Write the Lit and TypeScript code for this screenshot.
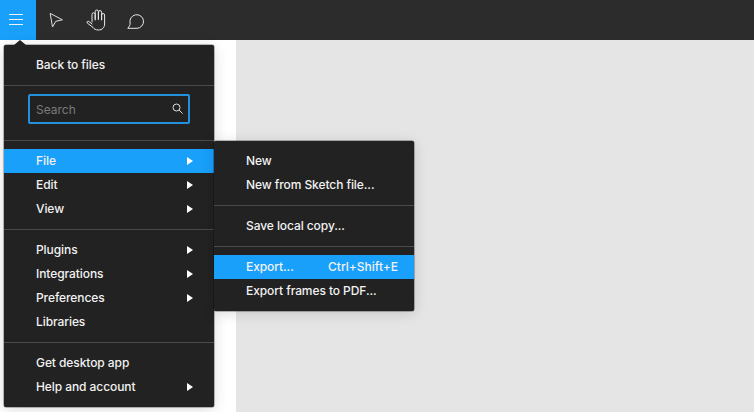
import { LitElement, html, css } from "lit";
import { customElement } from "lit/decorators.js";

type Row = { label: string; arrow?: boolean; active?: boolean; shortcut?: string };
type Group = Row[];

const mainGroups: Group[] = [
  [{ label: "File", arrow: true, active: true }, { label: "Edit", arrow: true }, { label: "View", arrow: true }],
  [{ label: "Plugins", arrow: true }, { label: "Integrations", arrow: true }, { label: "Preferences", arrow: true }, { label: "Libraries" }],
  [{ label: "Get desktop app" }, { label: "Help and account", arrow: true }],
];
const subGroups: Group[] = [
  [{ label: "New" }, { label: "New from Sketch file..." }],
  [{ label: "Save local copy..." }],
  [{ label: "Export...", active: true, shortcut: "Ctrl+Shift+E" }, { label: "Export frames to PDF..." }],
];

@customElement("app-root")
export class AppRoot extends LitElement {
  static styles = css`
    :host { display: block; width: 754px; height: 412px; overflow: hidden; position: relative; background: #fff; font-family: Inter, "Liberation Sans", sans-serif; }
    .bar { height: 40px; background: #2c2c2c; display: flex; align-items: center; }
    .tool { width: 40px; height: 40px; display: flex; align-items: center; justify-content: center; color: #fff; }
    .tool svg { display: block; }
    .burger { width: 36px; background: #18a0fb; box-sizing: border-box; padding-left: 9px; justify-content: flex-start; }
    .stage { display: flex; height: 372px; }
    .left { width: 236px; background: #fff; }
    .canvas { flex: 1; background: #e5e5e5; }
    .menu { position: absolute; background: #222; border-radius: 2px; padding: 8px 0; color: #f2f2f2; font-size: 12px; font-weight: 500; line-height: 24px; box-shadow: 0 2px 14px rgba(0,0,0,.15), 0 0 0 .5px rgba(0,0,0,.5); }
    .main { left: 4px; top: 45px; width: 210px; }
    .sub { left: 214px; top: 141px; width: 200px; }
    .caret { position: absolute; left: 10px; top: -5px; width: 0; height: 0; border-left: 6px solid transparent; border-right: 6px solid transparent; border-bottom: 5px solid #222; }
    .row { height: 24px; padding-left: 32px; padding-right: 21px; display: flex; align-items: center; justify-content: space-between; white-space: nowrap; letter-spacing: -.08px; }
    .sub .row { padding-right: 16px; }
    .row.active { background: #18a0fb; }
    .key { letter-spacing: 0; }
    .arrow { width: 0; height: 0; border-left: 6px solid #fff; border-top: 4px solid transparent; border-bottom: 4px solid transparent; }
    .sep { height: 1px; background: #4a4a4a; margin: 8px 0; }
    .sep.wide { margin-top: 16px; }
    .search { margin: 0 24px; height: 30px; box-sizing: border-box; border: 2px solid #2391dc; border-radius: 2px; display: flex; align-items: center; justify-content: space-between; padding: 2px 5px 0 6px; color: #7a7a7a; font-weight: 400; }
    .search svg { display: block; color: #ddd; margin-top: -3px; }
  `;

  private rows(groups: Group[]) {
    return groups.map((g, i) => html`
      ${i ? html`<div class="sep"></div>` : ""}
      ${g.map((r) => html`<div class="row ${r.active ? "active" : ""}"><span>${r.label}</span>${r.shortcut ? html`<span class="key">${r.shortcut}</span>` : ""}${r.arrow ? html`<span class="arrow"></span>` : ""}</div>`)}
    `);
  }

  render() {
    return html`
      <div class="bar">
        <div class="tool burger">
          <svg width="14" height="12" viewBox="0 0 14 12" fill="none" stroke="currentColor" opacity=".9"><path d="M0 .5h14M0 5.5h14M0 10.5h14"/></svg>
        </div>
        <div class="tool">
          <svg width="16" height="16" viewBox="0 0 16 16" fill="none" stroke="currentColor" stroke-width="1" opacity=".85"><path d="M2.2 1.4l12.2 6.4-6.6 1.5-3.3 5.7z" stroke-linejoin="round"/></svg>
        </div>
        <div class="tool">
          <svg width="20" height="22" viewBox="0 0 20 22" fill="none" stroke="currentColor" stroke-width="1" stroke-linecap="round" stroke-linejoin="round" opacity=".9"><path d="M6 13V5.4a1.6 1.6 0 0 1 3.2 0V11M9.2 10V2.6a1.6 1.6 0 0 1 3.2 0V10.5M12.4 10V3.2a1.6 1.6 0 0 1 3.2 0V11M15.6 10.5V6a1.5 1.5 0 0 1 3 0v9c0 3.5-2.5 6-6 6-3 0-4.5-1-5.6-2.6L1.2 14c-.8-1.2.8-2.4 1.8-1.4L6 15"/></svg>
        </div>
        <div class="tool">
          <svg width="18" height="17" viewBox="0 0 18 17" fill="none" stroke="currentColor" stroke-width="1" stroke-linejoin="round" opacity=".9"><path d="M.8 16.3h9.2a6.8 6.8 0 1 0-6.9-5.2c.3 1.6-.8 3.3-2.3 5.2z"/></svg>
        </div>
      </div>
      <div class="stage"><div class="left"></div><div class="canvas"></div></div>
      <div class="menu main">
        <div class="caret"></div>
        <div class="row">Back to files</div>
        <div class="sep"></div>
        <div class="search"><span>Search</span>
          <svg width="11" height="11" viewBox="0 0 11 11" fill="none" stroke="currentColor"><circle cx="4.5" cy="4.5" r="3.5"/><path d="M7 7l3.6 3.6"/></svg>
        </div>
        <div class="sep wide"></div>
        ${this.rows(mainGroups)}
      </div>
      <div class="menu sub">${this.rows(subGroups)}</div>
    `;
  }
}
